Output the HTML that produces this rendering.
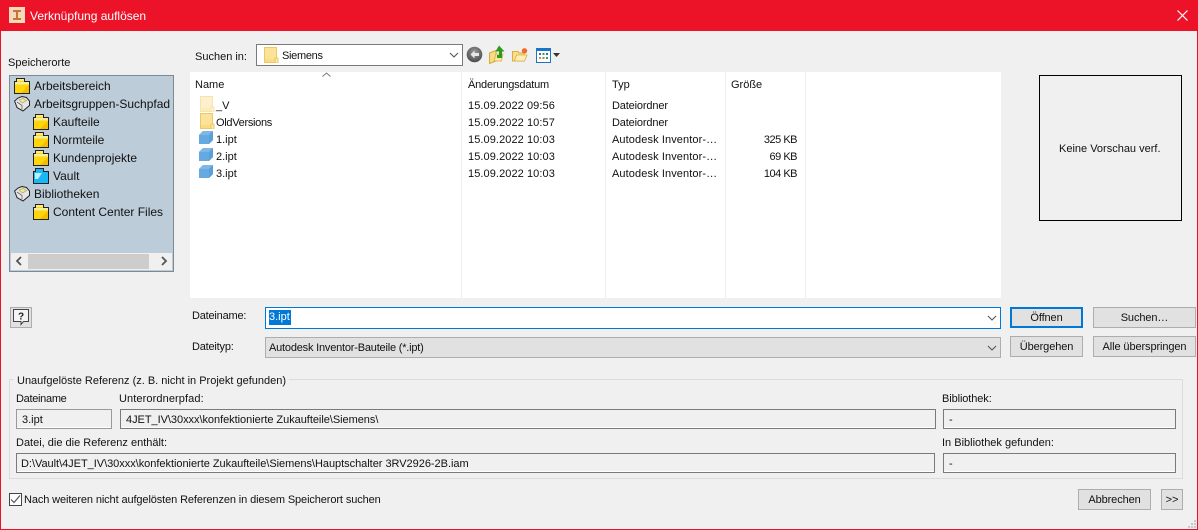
<!DOCTYPE html>
<html><head><meta charset="utf-8">
<style>
html,body{margin:0;padding:0}
body{width:1198px;height:530px;position:relative;overflow:hidden;background:#f0f0f0;font:11px "Liberation Sans",sans-serif;color:#111}
.a{position:absolute;box-sizing:border-box}
.t{position:absolute;white-space:nowrap;line-height:14px;height:14px}
.tr{font-size:12px}
.btn{position:absolute;box-sizing:border-box;background:#e1e1e1;border:1px solid #adadad;text-align:center;line-height:21px;height:21px;letter-spacing:-.1px}
.ro{position:absolute;box-sizing:border-box;background:#f0f0f0;border:1px solid #7a7a7a;height:20px;line-height:20px;padding-left:5px;white-space:nowrap;box-shadow:inset 0 -1px 0 #fff}
svg{position:absolute;display:block}
</style></head><body>
<div class="a" style="left:0;top:0;width:1198px;height:530px;border:1px solid #e81328;border-top:0"></div>
<div class="a" style="left:0;top:0;width:1198px;height:31px;background:#ec1328"></div>
<svg style="left:9px;top:7px" width="16" height="16" viewBox="0 0 16 16"><rect width="16" height="16" fill="#f6d9bd"/><path d="M4 3h8v2H9v6h3v2H4v-2h3V5H4z" fill="#c4782c"/></svg>
<div class="t" style="left:30px;top:9px;color:#fff;font-size:12px">Verknüpfung auflösen</div>
<svg style="left:1176px;top:9px" width="13" height="13" viewBox="0 0 13 13"><path d="M1.500 1.500l10 10M11.500 1.500l-10 10" stroke="#fff" stroke-width="1.200"/></svg>

<div class="t" style="left:8px;top:56px">Speicherorte</div>
<div class="a" style="left:9px;top:75px;width:165px;height:197px;background:#bdccd9;border:1px solid #7d8a96"></div>
<div class="a" style="left:11px;top:253px;width:161px;height:17px;background:#f0f0f0"></div>
<div class="a" style="left:28px;top:254px;width:121px;height:15px;background:#cdcdcd"></div>
<svg style="left:14px;top:256px" width="10" height="10" viewBox="0 0 10 10"><path d="M7 1L3 5l4 4" fill="none" stroke="#555" stroke-width="1.800"/></svg>
<svg style="left:159px;top:256px" width="10" height="10" viewBox="0 0 10 10"><path d="M3 1l4 4-4 4" fill="none" stroke="#555" stroke-width="1.800"/></svg>

<svg width="0" height="0" style="position:absolute"><defs>
<g id="fy"><path d="M.5 15.500V3.500H2.500V.5H10.500V3.500H15.500V15.500Z" fill="#ffd60a" stroke="#222"/><path d="M1 4H15V6.500H1Z" fill="#f4ec9e"/><path d="M3 1H10V3H3Z" fill="#ffe98a"/><path d="M7 15L15 7V15Z" fill="#f5bd00"/></g>
<g id="fb"><path d="M.5 15.500V3.500H2.500V.5H10.500V3.500H15.500V15.500Z" fill="#19b7f5" stroke="#222"/><path d="M2 5H9L5 11H2Z" fill="#bfeeff"/></g>
<g id="gl"><path d="M8 .5L12.500 1.500 15.500 5V9.500L9 15 3 11.500 .6 5 4 2Z" fill="#e6e6e6" stroke="#222"/><path d="M5 4l4-1.500 3.500 2-4 2.500z" fill="#f4ef6a" stroke="#999" stroke-width=".6"/><path d="M3 6l5 3.500v4" fill="none" stroke="#666" stroke-width=".8"/></g>
<g id="ff"><path d="M.5.5H12.500V15.500H.5Z" fill="#fde39a" stroke="#ecc868"/><path d="M1 12H12V15H1Z" fill="#fdd97f"/><rect x="11" y="11" width="3" height="5" fill="#fde9a5" stroke="#ecc868"/></g>
<g id="cube"><path d="M0 5L4 1H14V10L10 14H0Z" fill="#65a9e0"/><path d="M0 5L4 1H14L10 5Z" fill="#7db7e6"/><path d="M10 5L14 1V10L10 14Z" fill="#5b9fd8"/></g>
<radialGradient id="bk" cx=".5" cy=".35" r=".7"><stop offset="0" stop-color="#9a9a9a"/><stop offset="1" stop-color="#444"/></radialGradient>
</defs></svg>

<svg style="left:14px;top:78px" width="16" height="16"><use href="#fy"/></svg>
<div class="t tr" style="left:34px;top:79px">Arbeitsbereich</div>
<svg style="left:14px;top:96px" width="16" height="16"><use href="#gl"/></svg>
<div class="t tr" style="left:34px;top:97px">Arbeitsgruppen-Suchpfad</div>
<svg style="left:33px;top:114px" width="16" height="16"><use href="#fy"/></svg>
<div class="t tr" style="left:53px;top:115px">Kaufteile</div>
<svg style="left:33px;top:132px" width="16" height="16"><use href="#fy"/></svg>
<div class="t tr" style="left:53px;top:133px">Normteile</div>
<svg style="left:33px;top:150px" width="16" height="16"><use href="#fy"/></svg>
<div class="t tr" style="left:53px;top:151px">Kundenprojekte</div>
<svg style="left:33px;top:168px" width="16" height="16"><use href="#fb"/></svg>
<div class="t tr" style="left:53px;top:169px">Vault</div>
<svg style="left:14px;top:186px" width="16" height="16"><use href="#gl"/></svg>
<div class="t tr" style="left:34px;top:187px">Bibliotheken</div>
<svg style="left:33px;top:204px" width="16" height="16"><use href="#fy"/></svg>
<div class="t tr" style="left:53px;top:205px">Content Center Files</div>

<div class="a" style="left:10px;top:307px;width:22px;height:21px;background:#e1e1e1;border:1px solid #adadad"></div>
<svg style="left:13px;top:309px" width="16" height="17" viewBox="0 0 16 17"><path d="M.5.500H15.500V12.500H10.500L8 15.500V12.500H.5Z" fill="#f4f4f4" stroke="#444"/><text x="5" y="10.500" font-size="10" font-weight="bold" font-family="Liberation Sans" fill="#222">?</text></svg>

<div class="t" style="left:195px;top:50px">Suchen in:</div>
<div class="a" style="left:256px;top:44px;width:207px;height:22px;background:#fff;border:1px solid #7a7a7a"></div>
<svg style="left:264px;top:47px" width="15" height="16"><use href="#ff"/></svg>
<div class="t" style="left:282px;top:49px;letter-spacing:-.3px">Siemens</div>
<svg style="left:449px;top:52px" width="10" height="7" viewBox="0 0 10 7"><path d="M1 1l4 4 4-4" fill="none" stroke="#555" stroke-width="1.100"/></svg>

<svg style="left:466px;top:46px" width="17" height="17" viewBox="0 0 17 17"><circle cx="8.500" cy="8.500" r="7.800" fill="url(#bk)"/><path d="M8.500 4.500L4.500 8.500 8.500 12.500V10H13V7H8.500Z" fill="#e8e8e8"/></svg>
<svg style="left:489px;top:45px" width="16" height="19" viewBox="0 0 16 19"><path d="M.5 8L7 5.500V16L.5 18.500Z" fill="#f7dc85" stroke="#d5a93a"/><path d="M7 9h7l-1.500 7H5z" fill="#fbe79f" stroke="#d5a93a" stroke-width=".7"/><path d="M10 .5L15.500 6.500H13V13H8V10H10V6.500H6.500Z" fill="#2e9a1d"/></svg>
<svg style="left:512px;top:47px" width="16" height="16" viewBox="0 0 16 16"><path d="M.5 4.500H6L7 6H12V14H.5Z" fill="#f9de8c" stroke="#d9ac43"/><path d="M2.500 14L4.500 8H15L12.500 14Z" fill="#fdeeb5" stroke="#d9ac43" stroke-width=".8"/><circle cx="12.500" cy="3.800" r="2.700" fill="#ee6d2a"/></svg>
<svg style="left:536px;top:48px" width="25" height="15" viewBox="0 0 25 15"><rect x=".5" y=".5" width="14" height="14" fill="#fff" stroke="#1b74c4"/><rect x="1" y="1" width="13" height="2" fill="#1b74c4"/><rect x="3" y="5" width="2" height="2" fill="#2a6fc0"/><rect x="6.500" y="5" width="2" height="2" fill="#3da33c"/><rect x="10" y="5" width="2" height="2" fill="#2a6fc0"/><rect x="3" y="9" width="2" height="2" fill="#e08a2c"/><rect x="6.500" y="9" width="2" height="2" fill="#888"/><rect x="10" y="9" width="2" height="2" fill="#3da33c"/><path d="M17 5h7l-3.500 4z" fill="#333"/></svg>

<div class="a" style="left:190px;top:72px;width:811px;height:226px;background:#fff"></div>
<div class="a" style="left:461px;top:72px;width:1px;height:226px;background:#eaf0f6"></div>
<div class="a" style="left:605px;top:72px;width:1px;height:226px;background:#eaf0f6"></div>
<div class="a" style="left:725px;top:72px;width:1px;height:226px;background:#eaf0f6"></div>
<div class="a" style="left:805px;top:72px;width:1px;height:226px;background:#eaf0f6"></div>
<svg style="left:322px;top:72px" width="9" height="5" viewBox="0 0 9 5"><path d="M.5 4.500L4.500 1 8.500 4.500" fill="none" stroke="#777"/></svg>
<div class="t" style="left:195px;top:78px">Name</div>
<div class="t" style="left:468px;top:78px;letter-spacing:-.2px">Änderungsdatum</div>
<div class="t" style="left:612px;top:78px">Typ</div>
<div class="t" style="left:731px;top:78px">Größe</div>

<svg style="left:200px;top:96px;opacity:.5" width="15" height="16"><use href="#ff"/></svg>
<svg style="left:200px;top:113px" width="15" height="16"><use href="#ff"/></svg>
<svg style="left:199px;top:130px" width="15" height="15"><use href="#cube"/></svg>
<svg style="left:199px;top:147px" width="15" height="15"><use href="#cube"/></svg>
<svg style="left:199px;top:164px" width="15" height="15"><use href="#cube"/></svg>
<div class="t" style="left:216px;top:99px">_V</div>
<div class="t" style="left:216px;top:116px;letter-spacing:-.3px">OldVersions</div>
<div class="t" style="left:216px;top:133px">1.ipt</div>
<div class="t" style="left:216px;top:150px">2.ipt</div>
<div class="t" style="left:216px;top:167px">3.ipt</div>
<div class="t" style="left:468px;top:99px;letter-spacing:.08px">15.09.2022 09:56</div>
<div class="t" style="left:468px;top:116px;letter-spacing:.08px">15.09.2022 10:57</div>
<div class="t" style="left:468px;top:133px;letter-spacing:.08px">15.09.2022 10:03</div>
<div class="t" style="left:468px;top:150px;letter-spacing:.08px">15.09.2022 10:03</div>
<div class="t" style="left:468px;top:167px;letter-spacing:.08px">15.09.2022 10:03</div>
<div class="t" style="left:612px;top:99px;letter-spacing:-.15px">Dateiordner</div>
<div class="t" style="left:612px;top:116px;letter-spacing:-.15px">Dateiordner</div>
<div class="t" style="left:612px;top:133px;letter-spacing:.1px">Autodesk Inventor-…</div>
<div class="t" style="left:612px;top:150px;letter-spacing:.1px">Autodesk Inventor-…</div>
<div class="t" style="left:612px;top:167px;letter-spacing:.1px">Autodesk Inventor-…</div>
<div class="t" style="right:401px;top:133px;letter-spacing:-.5px">325 KB</div>
<div class="t" style="right:401px;top:150px;letter-spacing:-.5px">69 KB</div>
<div class="t" style="right:401px;top:167px;letter-spacing:-.5px">104 KB</div>

<div class="a" style="left:1039px;top:75px;width:143px;height:146px;border:1px solid #000"></div>
<div class="t" style="left:1059px;top:142px">Keine Vorschau verf.</div>

<div class="t" style="left:192px;top:309px;letter-spacing:-.2px">Dateiname:</div>
<div class="a" style="left:265px;top:307px;width:736px;height:22px;background:#fff;border:1px solid #0078d7"></div>
<div class="t" style="left:269px;top:310px;height:15px;line-height:15px;background:#0078d7;color:#fff;padding-right:1px">3.ipt</div>
<svg style="left:987px;top:315px" width="10" height="7" viewBox="0 0 10 7"><path d="M1 1l4 4 4-4" fill="none" stroke="#555" stroke-width="1.100"/></svg>
<div class="t" style="left:192px;top:340px;letter-spacing:-.2px">Dateityp:</div>
<div class="a" style="left:265px;top:337px;width:736px;height:21px;background:#e1e1e1;border:1px solid #adadad"></div>
<div class="t" style="left:269px;top:341px;letter-spacing:-.2px">Autodesk Inventor-Bauteile (*.ipt)</div>
<svg style="left:987px;top:345px" width="10" height="7" viewBox="0 0 10 7"><path d="M1 1l4 4 4-4" fill="none" stroke="#555" stroke-width="1.100"/></svg>

<div class="btn" style="left:1010px;top:307px;width:73px;height:21px;border:2px solid #0078d7;line-height:19px">Öffnen</div>
<div class="btn" style="left:1093px;top:307px;width:103px">Suchen…</div>
<div class="btn" style="left:1010px;top:336px;width:73px">Übergehen</div>
<div class="btn" style="left:1093px;top:336px;width:103px">Alle überspringen</div>

<div class="a" style="left:9px;top:379px;width:1174px;height:100px;border:1px solid #dcdcdc"></div>
<div class="t" style="left:14px;top:374px;background:#f0f0f0;padding:0 3px">Unaufgelöste Referenz (z. B. nicht in Projekt gefunden)</div>
<div class="t" style="left:16px;top:392px;letter-spacing:-.3px">Dateiname</div>
<div class="t" style="left:119px;top:392px;letter-spacing:.1px">Unterordnerpfad:</div>
<div class="t" style="left:942px;top:392px;letter-spacing:-.1px">Bibliothek:</div>
<div class="ro" style="left:16px;top:409px;width:96px;border-color:#9a9a9a">3.ipt</div>
<div class="ro" style="left:120px;top:409px;width:816px;letter-spacing:-.04px">4JET_IV\30xxx\konfektionierte Zukaufteile\Siemens\</div>
<div class="ro" style="left:943px;top:409px;width:233px">-</div>
<div class="t" style="left:16px;top:436px">Datei, die die Referenz enthält:</div>
<div class="t" style="left:942px;top:436px">In Bibliothek gefunden:</div>
<div class="ro" style="left:16px;top:453px;width:919px;padding-left:4px;letter-spacing:-.03px">D:\Vault\4JET_IV\30xxx\konfektionierte Zukaufteile\Siemens\Hauptschalter 3RV2926-2B.iam</div>
<div class="ro" style="left:943px;top:453px;width:233px">-</div>

<div class="a" style="left:9px;top:493px;width:13px;height:13px;background:#fff;border:1px solid #444"></div>
<svg style="left:10px;top:494px" width="11" height="11" viewBox="0 0 11 11"><path d="M1 5.500l3 3 6-7" fill="none" stroke="#555" stroke-width="1.200"/></svg>
<div class="t" style="left:24px;top:493px;letter-spacing:-.11px">Nach weiteren nicht aufgelösten Referenzen in diesem Speicherort suchen</div>
<div class="btn" style="left:1078px;top:489px;width:73px">Abbrechen</div>
<div class="btn" style="left:1161px;top:489px;width:22px">&gt;&gt;</div>
<svg style="left:1187px;top:519px" width="10" height="10" viewBox="0 0 10 10"><path d="M7 1h2v2H7zM4 4h2v2H4zM7 4h2v2H7zM1 7h2v2H1zM4 7h2v2H4zM7 7h2v2H7z" fill="#c8c8c8"/></svg>
</body></html>
